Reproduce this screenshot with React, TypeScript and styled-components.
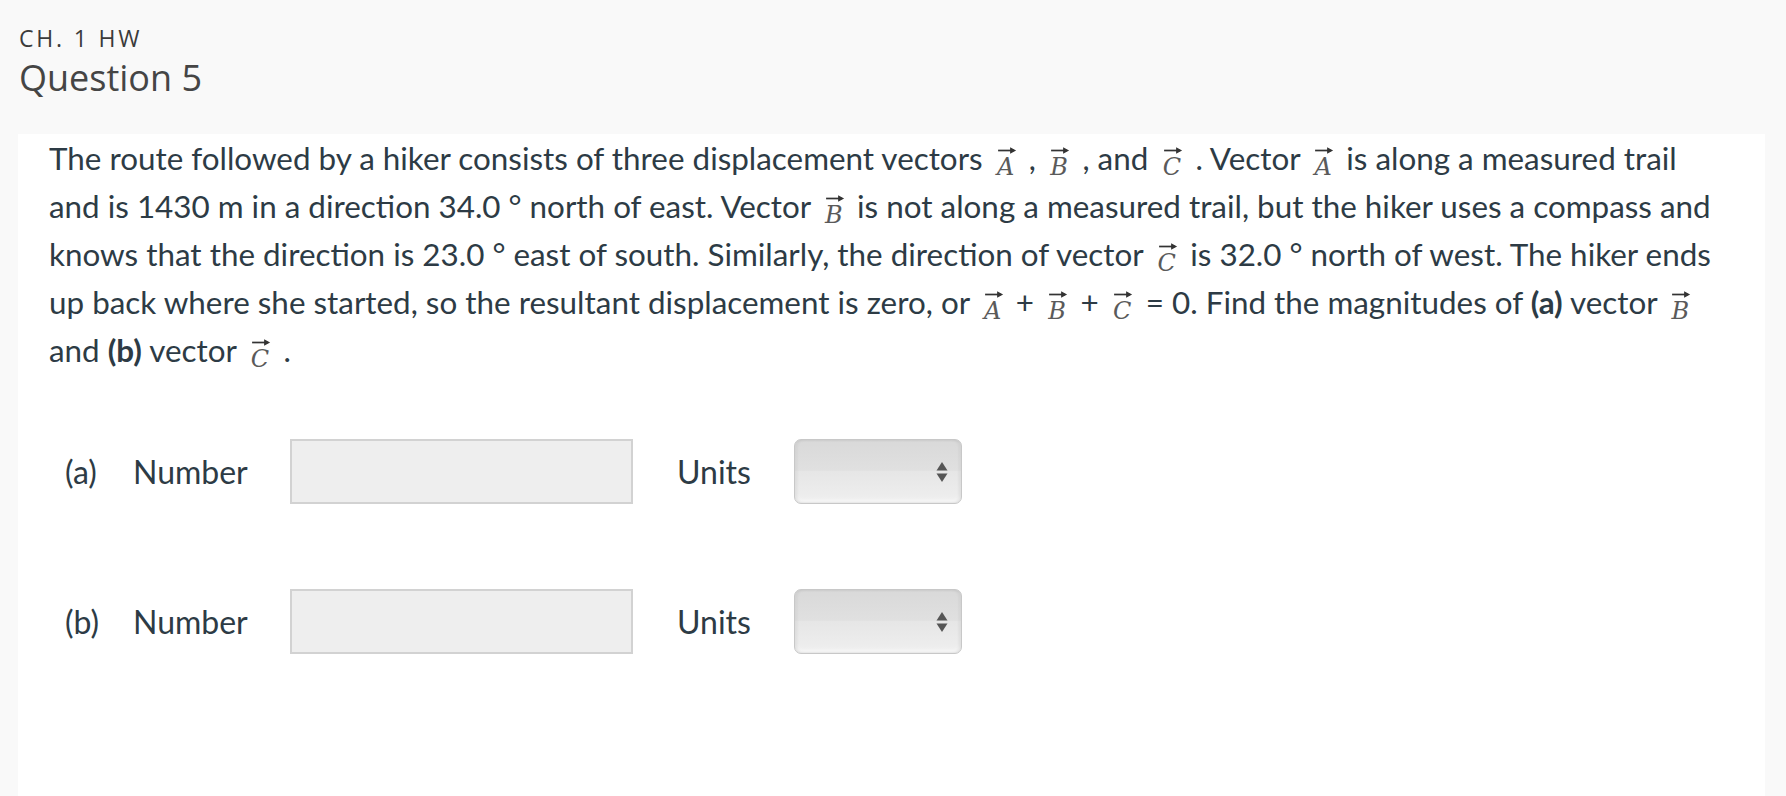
import React from "react";
import styled, { createGlobalStyle } from "styled-components";

const GlobalStyle = createGlobalStyle`
  html, body { margin: 0; padding: 0; background: #f9f9f9; }
  body { font-family: "Lato", "Liberation Sans", sans-serif; }
  * { box-sizing: border-box; }
`;

const Page = styled.div`
  display: flex;
  flex-direction: column;
  min-height: 796px;
  background: #f9f9f9;
`;

const Header = styled.header`
  padding: 25px 19px 0 19px;
  display: flex;
  flex-direction: column;
`;

const Eyebrow = styled.div`
  font-family: "Open Sans", "Noto Sans", sans-serif;
  font-size: 23px;
  line-height: 27px;
  letter-spacing: 2.8px;
  color: #3b3b3b;
  text-transform: uppercase;
`;

const Title = styled.h1`
  margin: 4px 0 0 0;
  font-family: "Open Sans", "Noto Sans", sans-serif;
  font-weight: 400;
  font-size: 36px;
  line-height: 44px;
  color: #454545;
`;

const Panel = styled.main`
  flex: 1;
  margin: 34px 21px 0 18px;
  background: #ffffff;
  padding: 0 30px 40px 31px;
`;

const QuestionText = styled.p`
  margin: 0;
  font-family: "Lato", "Liberation Sans", sans-serif;
  font-size: 31.4px;
  line-height: 48px;
  color: #2d3b45;
  b {
    font-weight: 700;
  }
`;

const VecBox = styled.span`
  position: relative;
  display: inline-block;
  font-family: "DejaVu Serif", "Liberation Serif", serif;
  font-style: italic;
  font-size: 24px;
  line-height: 1;
  color: #5a5a5a;
  vertical-align: -5px;
  margin: 0 4px;
  padding: 0 2.4px;
`;

const VecArrow = styled.svg`
  position: absolute;
  left: 50%;
  top: -9px;
  transform: translateX(-45%);
`;

const Vec = ({ l }: { l: string }) => (
  <VecBox>
    <VecArrow width="22" height="9" viewBox="0 0 22 9">
      <line x1="2" y1="4.5" x2="18" y2="4.5" stroke="#333" strokeWidth="1.7" />
      <path d="M14 1.3 L20 4.5 L14 7.7 Z" fill="#333" />
    </VecArrow>
    {l}
  </VecBox>
);

const AnswerList = styled.div`
  display: flex;
  flex-direction: column;
  gap: 85px;
  margin-top: 65px;
  padding-left: 16px;
`;

const AnswerRow = styled.div`
  display: flex;
  align-items: center;
`;

const PartLabel = styled.span`
  width: 68px;
  font-size: 32px;
  color: #2d3b45;
`;

const FieldLabel = styled.span<{ $w: number; $ml?: number }>`
  width: ${(p) => p.$w}px;
  margin-left: ${(p) => p.$ml ?? 0}px;
  font-size: 32px;
  color: #2d3b45;
`;

const NumberInput = styled.input`
  width: 343px;
  height: 65px;
  border: 2px solid #d2d2d2;
  background: #eeeeee;
  border-radius: 0;
  font-family: "Lato", "Liberation Sans", sans-serif;
  font-size: 28px;
  padding: 0 12px;
  outline: none;
`;

const SelectWrap = styled.div`
  position: relative;
  width: 168px;
  height: 65px;
`;

const UnitSelect = styled.select`
  appearance: none;
  -webkit-appearance: none;
  width: 100%;
  height: 100%;
  border: 1px solid #c8c8c8;
  border-radius: 7px;
  background: linear-gradient(
    to bottom,
    #d9d9d9 0%,
    #e0e0e0 48%,
    #e6e6e6 50%,
    #efefef 100%
  );
  box-shadow: inset 2px 0 3px rgba(0, 0, 0, 0.08),
    inset -2px 0 3px rgba(0, 0, 0, 0.08), inset 0 -3px 4px rgba(255, 255, 255, 0.6);
  font-family: "Lato", "Liberation Sans", sans-serif;
  font-size: 24px;
  color: #2d3b45;
  padding: 0 40px 0 12px;
  outline: none;
`;

const SelectArrows = styled.svg`
  position: absolute;
  right: 14px;
  top: 50%;
  transform: translateY(-50%);
  pointer-events: none;
`;

const Answer = ({ part }: { part: string }) => (
  <AnswerRow>
    <PartLabel>({part})</PartLabel>
    <FieldLabel $w={157}>Number</FieldLabel>
    <NumberInput type="text" aria-label={`Number ${part}`} />
    <FieldLabel $w={117} $ml={44}>
      Units
    </FieldLabel>
    <SelectWrap>
      <UnitSelect aria-label={`Units ${part}`} defaultValue="">
        <option value=""></option>
        <option value="m">m</option>
        <option value="km">km</option>
      </UnitSelect>
      <SelectArrows width="12" height="22" viewBox="0 0 12 22">
        <path d="M6 1 L11.5 9.5 L0.5 9.5 Z" fill="#555" />
        <path d="M6 21 L11.5 12.5 L0.5 12.5 Z" fill="#555" />
      </SelectArrows>
    </SelectWrap>
  </AnswerRow>
);

export default function App() {
  return (
    <Page>
      <GlobalStyle />
      <Header>
        <Eyebrow>CH. 1 HW</Eyebrow>
        <Title>Question 5</Title>
      </Header>
      <Panel>
        <QuestionText>
          The route followed by a hiker consists of three displacement vectors{" "}
          <Vec l="A" /> , <Vec l="B" /> , and <Vec l="C" /> . Vector <Vec l="A" /> is
          along a measured trail and is 1430 m in a direction 34.0 ° north of east.
          Vector <Vec l="B" /> is not along a measured trail, but the hiker uses a
          compass and knows that the direction is 23.0 ° east of south. Similarly, the
          direction of vector <Vec l="C" /> is 32.0 ° north of west. The hiker ends up
          back where she started, so the resultant displacement is zero, or{" "}
          <Vec l="A" /> + <Vec l="B" /> + <Vec l="C" /> = 0. Find the magnitudes of{" "}
          <b>(a)</b> vector <Vec l="B" /> and <b>(b)</b> vector <Vec l="C" /> .
        </QuestionText>
        <AnswerList>
          <Answer part="a" />
          <Answer part="b" />
        </AnswerList>
      </Panel>
    </Page>
  );
}
